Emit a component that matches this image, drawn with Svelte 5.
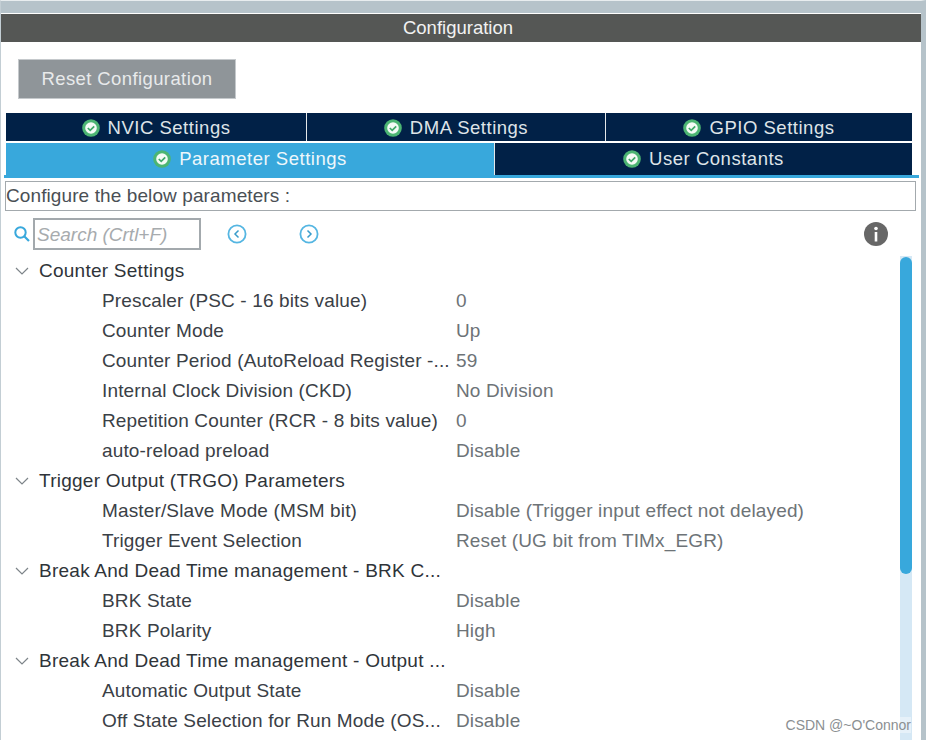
<script lang="ts">
  type Row = { label: string; value?: string; group?: boolean };
  const rows: Row[] = [
    { label: 'Counter Settings', group: true },
    { label: 'Prescaler (PSC - 16 bits value)', value: '0' },
    { label: 'Counter Mode', value: 'Up' },
    { label: 'Counter Period (AutoReload Register -...', value: '59' },
    { label: 'Internal Clock Division (CKD)', value: 'No Division' },
    { label: 'Repetition Counter (RCR - 8 bits value)', value: '0' },
    { label: 'auto-reload preload', value: 'Disable' },
    { label: 'Trigger Output (TRGO) Parameters', group: true },
    { label: 'Master/Slave Mode (MSM bit)', value: 'Disable (Trigger input effect not delayed)' },
    { label: 'Trigger Event Selection', value: 'Reset (UG bit from TIMx_EGR)' },
    { label: 'Break And Dead Time management - BRK C...', group: true },
    { label: 'BRK State', value: 'Disable' },
    { label: 'BRK Polarity', value: 'High' },
    { label: 'Break And Dead Time management - Output ...', group: true },
    { label: 'Automatic Output State', value: 'Disable' },
    { label: 'Off State Selection for Run Mode (OS...', value: 'Disable' }
  ];
  const topTabs = ['NVIC Settings', 'DMA Settings', 'GPIO Settings'];
</script>

{#snippet check()}
  <svg class="check" viewBox="0 0 18 18" width="18" height="18">
    <circle cx="9" cy="9" r="8.8" fill="#4cb573" />
    <circle cx="9" cy="9" r="5.8" fill="#f4fbf6" />
    <path d="M5.8 9l2.400 2.300 4-4" fill="none" stroke="#3fa868" stroke-width="1.7" />
  </svg>
{/snippet}

<div class="window">
  <div class="topbar"></div>
  <div class="title">Configuration</div>
  <div class="actions"><button class="reset">Reset Configuration</button></div>

  <div class="tabs">
    <div class="tabrow top">
      {#each topTabs as t}
        <div class="tab">{@render check()}<span>{t}</span></div>
      {/each}
    </div>
    <div class="tabrow bottom">
      <div class="tab active">{@render check()}<span>Parameter Settings</span></div>
      <div class="tab">{@render check()}<span>User Constants</span></div>
    </div>
  </div>
  <div class="underline"></div>

  <div class="hint">Configure the below parameters :</div>

  <div class="searchbar">
    <svg class="glass" viewBox="0 0 18 18" width="18" height="18">
      <circle cx="7.500" cy="7.500" r="5.200" fill="none" stroke="#38a8dc" stroke-width="2" />
      <path d="M11.500 11.500l4.500 4.500" stroke="#38a8dc" stroke-width="2.200" />
    </svg>
    <div class="search">Search (Crtl+F)</div>
    <svg class="nav prev" viewBox="0 0 20 20" width="20" height="20">
      <circle cx="10" cy="10" r="8.600" fill="none" stroke="#55b6e2" stroke-width="1.800" />
      <path d="M11.500 6.500L8 10l3.500 3.500" fill="none" stroke="#3a9ccb" stroke-width="1.500" />
    </svg>
    <svg class="nav next" viewBox="0 0 20 20" width="20" height="20">
      <circle cx="10" cy="10" r="8.600" fill="none" stroke="#55b6e2" stroke-width="1.800" />
      <path d="M8.500 6.500L12 10l-3.500 3.500" fill="none" stroke="#3a9ccb" stroke-width="1.500" />
    </svg>
    <svg class="info" viewBox="0 0 24 24" width="24" height="24">
      <circle cx="12" cy="12" r="12" fill="#676767" />
      <circle cx="12" cy="6.500" r="1.800" fill="#fff" />
      <path d="M10.700 10h2.600v9.500h-2.600z" fill="#fff" />
    </svg>
  </div>

  <div class="body">
    <div class="list">
      {#each rows as r}
        {#if r.group}
          <div class="row group">
            <svg class="chev" viewBox="0 0 14 8" width="14" height="8">
              <path d="M1 1l6 6 6-6" fill="none" stroke="#7d8489" stroke-width="1.200" />
            </svg>
            <span>{r.label}</span>
          </div>
        {:else}
          <div class="row">
            <span class="label">{r.label}</span>
            <span class="value">{r.value}</span>
          </div>
        {/if}
      {/each}
    </div>
    <div class="scrollbar"><div class="thumb"></div></div>
  </div>

  <div class="watermark">CSDN @~O'Connor</div>
</div>

<style>
  :global(body) { margin: 0; background: #fff; }
  .window {
    position: relative;
    width: 926px;
    height: 740px;
    overflow: hidden;
    box-sizing: border-box;
    border-left: 1px solid #c3ced4;
    border-right: 5px solid #b6c3ca;
    border-top: 1px solid #e8edef;
    font-family: "Liberation Sans", Arial, sans-serif;
    font-size: 19px;
    color: #3a4046;
  }
  .topbar { height: 12px; background: #b6c3ca; }
  .title {
    height: 28px;
    margin-top: 1px;
    padding-right: 6px;
    background: #555755;
    color: #f2f2f2;
    text-align: center;
    line-height: 28px;
    font-size: 18.5px;
  }
  .actions { padding: 17px 0 14px 17px; }
  .reset {
    display: block;
    width: 218px;
    height: 40px;
    padding: 0;
    border: 1px solid #c5c9cc;
    background: #8f9599;
    color: #e8eaeb;
    font: inherit;
    font-size: 18.5px;
    letter-spacing: 0.4px;
  }
  .tabs { margin-left: 5px; width: 906px; }
  .tabrow { display: flex; }
  .tabrow.top { height: 30px; }
  .tabrow.top .tab { height: 28px; padding-top: 1px; }
  .tabrow.top .tab + .tab { border-left: 1px solid #e4e8ea; }
  .tabrow.top .tab:nth-child(1) { width: 300px; }
  .tabrow.top .tab:nth-child(2) { width: 299px; }
  .tabrow.top .tab:nth-child(3) { flex: 1; }
  .tabrow.bottom { height: 32px; }
  .tabrow.bottom .tab:nth-child(1) { width: 488px; }
  .tabrow.bottom .tab:nth-child(2) { flex: 1; border-left: 1px solid #e4e8ea; }
  .tab {
    display: flex;
    align-items: center;
    justify-content: center;
    gap: 8px;
    box-sizing: border-box;
    background: #012147;
    color: #dfe4e8;
    font-size: 18.5px;
    letter-spacing: 0.52px;
  }
  .tab.active { background: #38a8dc; color: #eef7fb; }
  .check { flex: none; }
  .underline { height: 3px; margin-left: 3px; width: 915px; background: #38a8dc; }
  .hint {
    box-sizing: border-box;
    height: 30px;
    margin: 3px 0 0 4px;
    width: 911px;
    border: 1px solid #a3a9ad;
    line-height: 28px;
    letter-spacing: 0.1px;
    color: #4a4f55;
  }
  .searchbar {
    display: flex;
    align-items: center;
    height: 32px;
    margin-top: 7px;
    padding-left: 12px;
  }
  .glass { flex: none; }
  .search {
    box-sizing: border-box;
    width: 168px;
    height: 32px;
    margin-left: 2px;
    border: 2px solid #a3a9ad;
    padding: 1px 0 0 2px;
    line-height: 28px;
    font-style: italic;
    color: #a7abae;
  }
  .nav.prev { margin-left: 26px; }
  .nav.next { margin-left: 52px; }
  .info { margin-left: 545px; }
  .body { display: flex; margin-top: 6px; height: 484px; }
  .list { width: 899px; }
  .row {
    display: flex;
    align-items: center;
    height: 30px;
    padding-left: 101px;
    white-space: nowrap;
    letter-spacing: 0.14px;
  }
  .row.group { padding-left: 14px; color: #2f3439; letter-spacing: 0.25px; }
  .chev { margin-right: 10px; flex: none; }
  .label { width: 354px; flex: none; }
  .value { color: #6d7377; }
  .scrollbar { width: 12px; background: #d5e8f5; }
  .thumb { height: 317px; margin-top: 1px; background: #38a8dc; border-radius: 6px; }
  .watermark {
    position: absolute;
    right: 10px;
    top: 716px;
    font-size: 14px;
    color: #8b8f92;
    background: rgba(255, 255, 255, 0.4);
  }
</style>
